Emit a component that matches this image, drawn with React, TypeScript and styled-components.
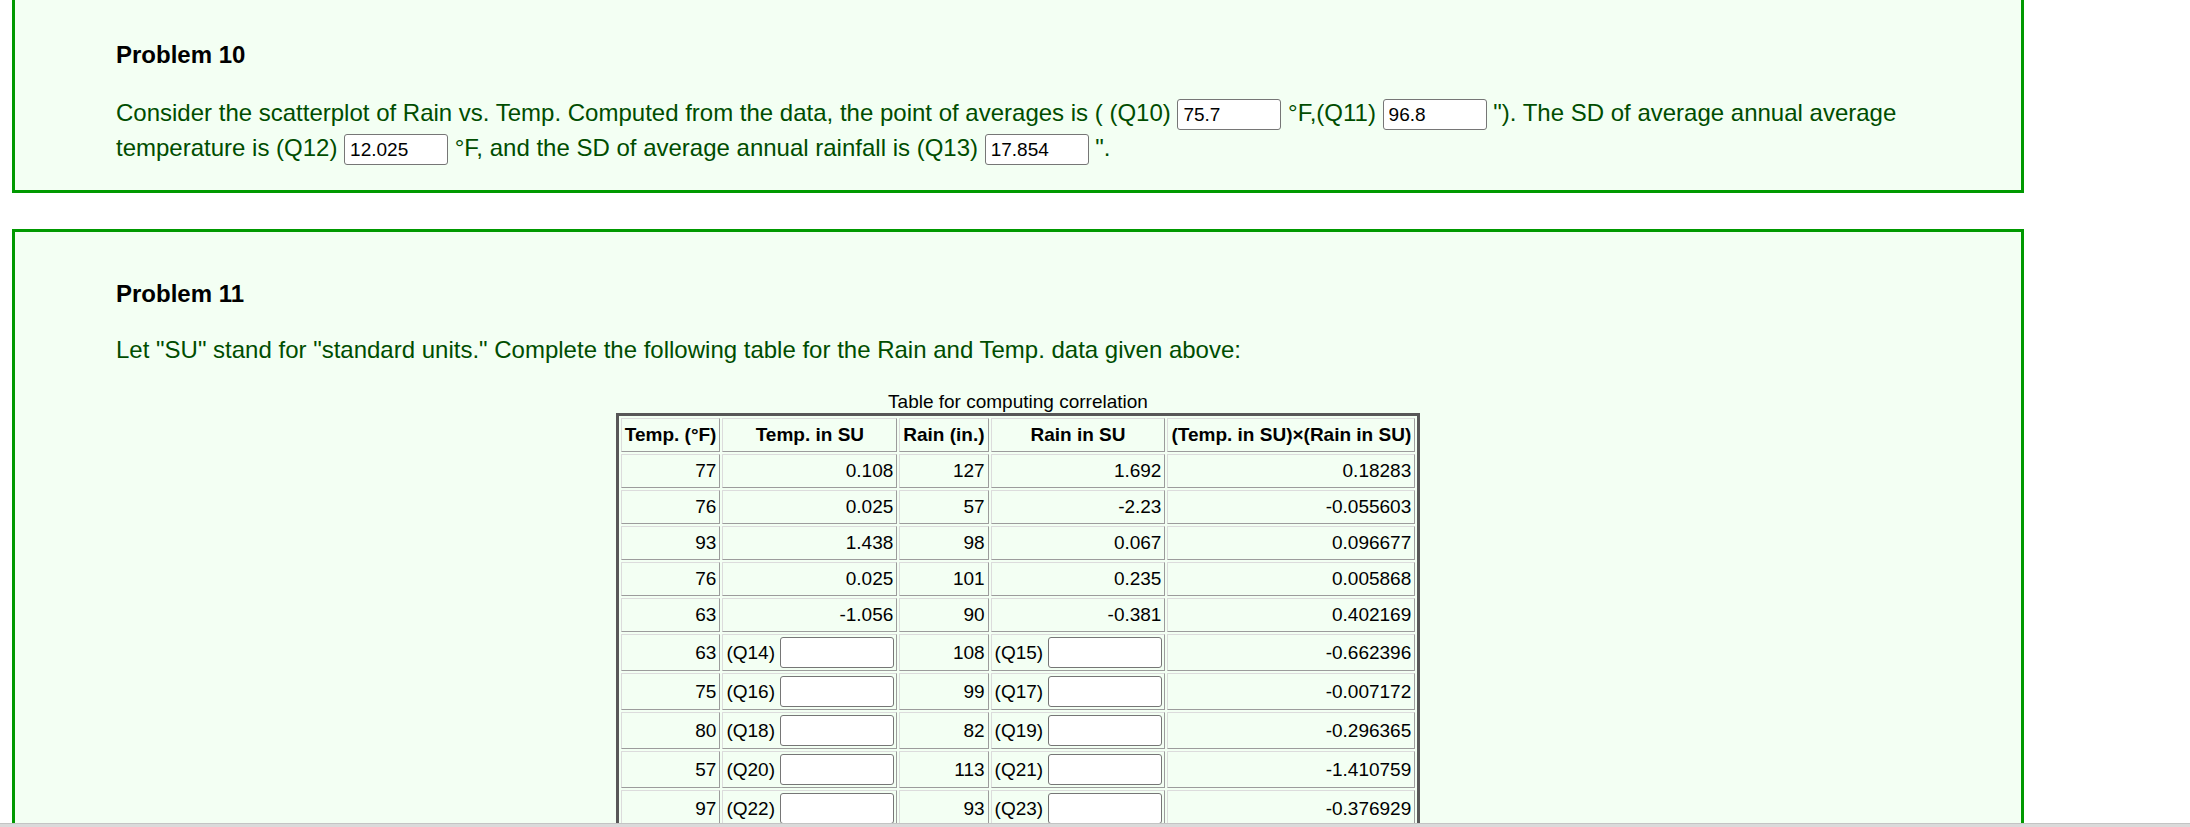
import React from "react";
import styled, { createGlobalStyle } from "styled-components";

const GlobalStyle = createGlobalStyle`
  html, body {
    margin: 0;
    padding: 0;
    background: #ffffff;
    overflow: hidden;
  }
  body {
    font-family: "Liberation Sans", Arial, sans-serif;
  }
`;

const Page = styled.main`
  margin-top: -10px;
  padding-left: 12px;
  display: flex;
  flex-direction: column;
  align-items: flex-start;
  gap: 36px;
`;

const ProblemBox = styled.section`
  box-sizing: border-box;
  width: 2012px;
  border: 3px solid #009900;
  background: #f3fff3;
  padding: 20px 101px 23px;
`;

const Title = styled.p`
  margin: 28px 0 0;
  font-size: 24px;
  font-weight: bold;
  color: #000000;
  line-height: normal;
`;

const Prose = styled.p`
  margin: 28px 0 0;
  font-size: 24px;
  color: #004d00;
  line-height: normal;
`;

const AnswerInput = styled.input<{ $w: number }>`
  box-sizing: border-box;
  width: ${(p) => p.$w}px;
  height: 31px;
  margin: 2px 0;
  padding: 0 5px;
  border: 1px solid #767676;
  border-radius: 3px;
  background: #ffffff;
  font-family: "Liberation Sans", Arial, sans-serif;
  font-size: 19px;
  color: #000000;
  vertical-align: baseline;
  outline: none;
`;

const CellInput = styled(AnswerInput)`
  margin: 0;
`;

const CorrTable = styled.table`
  margin: 27px auto 0;
  border: 3px solid #575757;
  border-spacing: 2px;
  font-family: "Liberation Sans", Arial, sans-serif;
  font-size: 19px;
  color: #000000;
`;

const Caption = styled.caption`
  font-size: 19px;
  line-height: normal;
  padding: 0;
  color: #000000;
  text-align: center;
`;

const HeadCell = styled.th`
  padding: 5px 3px 5px 3px;
  font-weight: bold;
  text-align: center;
  white-space: nowrap;
  border: 1px solid;
  border-color: #dcdcdc #9c9c9c #9c9c9c #dcdcdc;
`;

const Cell = styled.td<{ $input?: boolean }>`
  padding: ${(p) => (p.$input ? "2px 2px 2px 3px" : "5px 3px")};
  text-align: ${(p) => (p.$input ? "left" : "right")};
  white-space: nowrap;
  border: 1px solid;
  border-color: #dcdcdc #9c9c9c #9c9c9c #dcdcdc;
`;

const ScrollEdge = styled.div`
  position: fixed;
  left: 0;
  right: 0;
  bottom: 0;
  height: 3px;
  background: #dadada;
  border-top: 1px solid #c4c4c4;
`;

type Row = {
  temp: string;
  tempSU: string | null;
  rain: string;
  rainSU: string | null;
  prod: string;
  q?: [string, string];
};

const rows: Row[] = [
  { temp: "77", tempSU: "0.108", rain: "127", rainSU: "1.692", prod: "0.18283" },
  { temp: "76", tempSU: "0.025", rain: "57", rainSU: "-2.23", prod: "-0.055603" },
  { temp: "93", tempSU: "1.438", rain: "98", rainSU: "0.067", prod: "0.096677" },
  { temp: "76", tempSU: "0.025", rain: "101", rainSU: "0.235", prod: "0.005868" },
  { temp: "63", tempSU: "-1.056", rain: "90", rainSU: "-0.381", prod: "0.402169" },
  { temp: "63", tempSU: null, rain: "108", rainSU: null, prod: "-0.662396", q: ["Q14", "Q15"] },
  { temp: "75", tempSU: null, rain: "99", rainSU: null, prod: "-0.007172", q: ["Q16", "Q17"] },
  { temp: "80", tempSU: null, rain: "82", rainSU: null, prod: "-0.296365", q: ["Q18", "Q19"] },
  { temp: "57", tempSU: null, rain: "113", rainSU: null, prod: "-1.410759", q: ["Q20", "Q21"] },
  { temp: "97", tempSU: null, rain: "93", rainSU: null, prod: "-0.376929", q: ["Q22", "Q23"] },
];

function SUCell({ value, label }: { value: string | null; label?: string }) {
  if (value !== null) return <Cell>{value}</Cell>;
  return (
    <Cell $input>
      ({label}) <CellInput $w={114} defaultValue="" />
    </Cell>
  );
}

export default function App() {
  return (
    <>
      <GlobalStyle />
      <Page>
        <ProblemBox>
          <Title>Problem 10</Title>
          <Prose>
            Consider the scatterplot of Rain vs. Temp. Computed from the data, the point of averages is ( (Q10){" "}
            <AnswerInput $w={104} defaultValue="75.7" readOnly /> °F,(Q11){" "}
            <AnswerInput $w={104} defaultValue="96.8" readOnly /> "). The SD of average annual average temperature
            is (Q12) <AnswerInput $w={104} defaultValue="12.025" readOnly /> °F, and the SD of average annual
            rainfall is (Q13) <AnswerInput $w={104} defaultValue="17.854" readOnly /> ".
          </Prose>
        </ProblemBox>
        <ProblemBox>
          <Title>Problem 11</Title>
          <Prose>
            Let "SU" stand for "standard units." Complete the following table for the Rain and Temp. data given
            above:
          </Prose>
          <CorrTable>
            <Caption>Table for computing correlation</Caption>
            <thead>
              <tr>
                <HeadCell>Temp. (°F)</HeadCell>
                <HeadCell>Temp. in SU</HeadCell>
                <HeadCell>Rain (in.)</HeadCell>
                <HeadCell>Rain in SU</HeadCell>
                <HeadCell>(Temp. in SU)×(Rain in SU)</HeadCell>
              </tr>
            </thead>
            <tbody>
              {rows.map((r, i) => (
                <tr key={i}>
                  <Cell>{r.temp}</Cell>
                  <SUCell value={r.tempSU} label={r.q?.[0]} />
                  <Cell>{r.rain}</Cell>
                  <SUCell value={r.rainSU} label={r.q?.[1]} />
                  <Cell>{r.prod}</Cell>
                </tr>
              ))}
            </tbody>
          </CorrTable>
        </ProblemBox>
      </Page>
      <ScrollEdge />
    </>
  );
}
